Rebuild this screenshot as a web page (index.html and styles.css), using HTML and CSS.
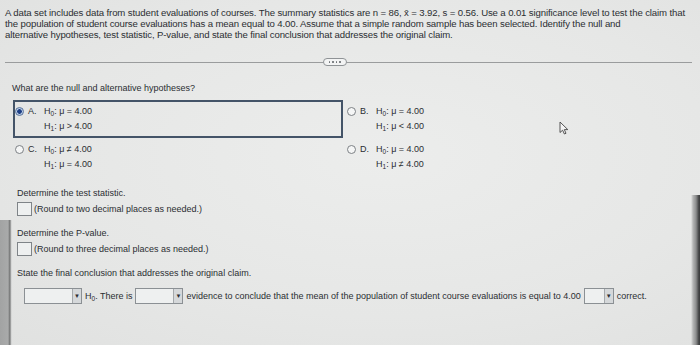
FILE: index.html
```html
<!DOCTYPE html>
<html lang="en">
<head>
<meta charset="utf-8">
<title>Hypothesis test</title>
<link rel="stylesheet" href="styles.css">
</head>
<body>
<div class="page">
  <p class="intro">A data set includes data from student evaluations of courses. The summary statistics are n = 86, x̄ = 3.92, s = 0.56. Use a 0.01 significance level to test the claim that<br>the population of student course evaluations has a mean equal to 4.00. Assume that a simple random sample has been selected. Identify the null and<br>alternative hypotheses, test statistic, P-value, and state the final conclusion that addresses the original claim.</p>

  <div class="divider"><span class="pill"><i></i><i></i><i></i><i></i></span></div>

  <p class="question">What are the null and alternative hypotheses?</p>

  <div class="options">
    <div class="option selected">
      <span class="radio on"></span><span class="letter">A.</span>
      <span class="hyp">H<sub>0</sub>: μ = 4.00<br>H<sub>1</sub>: μ &gt; 4.00</span>
    </div>
    <div class="option">
      <span class="radio"></span><span class="letter">B.</span>
      <span class="hyp">H<sub>0</sub>: μ = 4.00<br>H<sub>1</sub>: μ &lt; 4.00</span>
    </div>
    <div class="option">
      <span class="radio"></span><span class="letter">C.</span>
      <span class="hyp">H<sub>0</sub>: μ ≠ 4.00<br>H<sub>1</sub>: μ = 4.00</span>
    </div>
    <div class="option">
      <span class="radio"></span><span class="letter">D.</span>
      <span class="hyp">H<sub>0</sub>: μ = 4.00<br>H<sub>1</sub>: μ ≠ 4.00</span>
    </div>
  </div>

  <div class="work">
    <p class="prompt">Determine the test statistic.</p>
    <div class="answer"><span class="box"></span><span>(Round to two decimal places as needed.)</span></div>
    <p class="prompt">Determine the P-value.</p>
    <div class="answer"><span class="box"></span><span>(Round to three decimal places as needed.)</span></div>
    <p class="prompt">State the final conclusion that addresses the original claim.</p>
    <div class="conclusion">
      <span class="select wide"><span class="arrow">▼</span></span>
      <span>H<sub>0</sub>. There is</span>
      <span class="select mid"><span class="arrow">▼</span></span>
      <span>evidence to conclude that the mean of the population of student course evaluations is equal to 4.00</span>
      <span class="select small"><span class="arrow">▼</span></span>
      <span>correct.</span>
    </div>
  </div>

  <svg class="cursor" width="10" height="14" viewBox="0 0 10 14" aria-hidden="true">
    <path d="M1 1 L1 11.5 L3.6 9.2 L5.4 13 L7 12.3 L5.3 8.6 L8.8 8.6 Z" fill="#f4f4f4" stroke="#444" stroke-width="0.9" stroke-linejoin="round"/>
  </svg>
</div>
</body>
</html>
```
FILE: styles.css
```css
html, body {
  margin: 0;
  padding: 0;
}
body {
  width: 700px;
  height: 345px;
  overflow: hidden;
  background-color: #e6e7e6;
  background-image:
    linear-gradient(to right, #a2a3a3 0, #a9aaaa 8px, #6f7070 10px, #c9caca 11px, rgba(230,231,230,0) 12px),
    linear-gradient(to right, rgba(230,231,230,0) 0, #b5b6b6 2px, #8d8e8e 5px, #3e3f40 8px),
    radial-gradient(ellipse at 55% 45%, #ecedec 0, #e6e7e6 60%, #e0e1e0 100%);
  background-size: 12px 125px, 9px 150px, 100% 100%;
  background-position: left bottom, right bottom, 0 0;
  background-repeat: no-repeat;
  font-family: "Liberation Sans", Arial, sans-serif;
  color: #2b2e32;
}
.page {
  position: relative;
  height: 345px;
  padding: 7px 8px 0 5px;
  box-sizing: border-box;
}
p { margin: 0; }
.intro {
  font-size: 9.6px;
  line-height: 11px;
  letter-spacing: -0.12px;
  white-space: nowrap;
}
.divider {
  margin-top: 18px;
  height: 8px;
  display: flex;
  align-items: center;
  justify-content: center;
  background: linear-gradient(#9a9c9d, #9a9c9d) center / 100% 1px no-repeat;
  padding-right: 28px;
}
.pill {
  display: flex;
  gap: 2px;
  align-items: center;
  justify-content: center;
  width: 22px;
  height: 6px;
  border: 1px solid #8f9396;
  border-radius: 4px;
  background: #f3f4f4;
}
.pill i {
  width: 1.5px;
  height: 1.5px;
  background: #6a6e72;
  border-radius: 50%;
}
.question {
  margin: 17px 0 0 7px;
  font-size: 9px;
  line-height: 11px;
}
.options {
  margin: 6px 0 0 8px;
  display: grid;
  grid-template-columns: 330px 200px;
  column-gap: 2px;
  font-size: 9px;
}
.option {
  display: flex;
  align-items: flex-start;
  border: 2px solid transparent;
  padding: 2px 0;
}
.option.selected {
  border-color: #445468;
}
.radio {
  width: 7px;
  height: 7px;
  border: 1px solid #7d8185;
  border-radius: 50%;
  background: #f5f6f6;
  margin: 3px 4px 0 0;
  flex: none;
  box-sizing: content-box;
}
.radio.on {
  background: radial-gradient(circle, #1d3f86 0, #1d3f86 2px, #b9cbe4 2.6px);
  border-color: #58739b;
}
.letter {
  width: 16px;
  flex: none;
  line-height: 15px;
}
.hyp {
  display: block;
  line-height: 15px;
}
.hyp sub, .conclusion sub {
  font-size: 6.5px;
  vertical-align: -2px;
  line-height: 0;
}
.work {
  margin: 2px 0 0 12px;
  font-size: 9px;
  line-height: 11px;
}
.prompt {
  margin-top: 12px;
}
.answer {
  margin-top: 3px;
  display: flex;
  align-items: center;
  gap: 2px;
}
.box {
  width: 13px;
  height: 12px;
  border: 1px solid #7f8488;
  background: #eef0f0;
  flex: none;
}
.conclusion {
  margin: 9px 0 0 7px;
  display: flex;
  align-items: center;
  gap: 3px;
  white-space: nowrap;
}
.select {
  height: 14px;
  border: 1px solid #8b9094;
  background: #eef0f0;
  display: flex;
  justify-content: flex-end;
  align-items: stretch;
  flex: none;
}
.select.wide { width: 56px; }
.select.mid { width: 46px; }
.select.small { width: 28px; }
.arrow {
  width: 8px;
  font-size: 6px;
  line-height: 14px;
  text-align: center;
  color: #2b2e32;
  background: #d5d8da;
  border-left: 1px solid #a4a8ab;
}
.cursor {
  position: absolute;
  left: 559px;
  top: 121px;
}
```
